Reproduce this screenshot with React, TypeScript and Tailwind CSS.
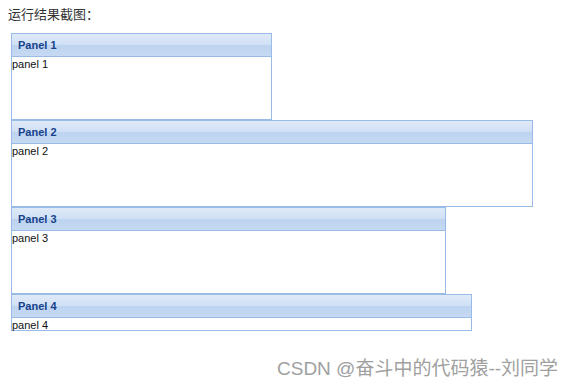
// Four stacked easyui-style panels, each with its own width.
const panels = [
  { title: "Panel 1", body: "panel 1", width: "w-[261px]", tall: true },
  { title: "Panel 2", body: "panel 2", width: "w-[522px]", tall: true },
  { title: "Panel 3", body: "panel 3", width: "w-[435px]", tall: true },
  { title: "Panel 4", body: "panel 4", width: "w-[461px]", tall: false },
];

function Panel({
  title,
  body,
  width,
  tall,
}: {
  title: string;
  body: string;
  width: string;
  tall: boolean;
}) {
  return (
    <div className={`${width} border border-[#99bbe8]`}>
      <div className="h-[23px] border-b border-[#99bbe8] bg-[linear-gradient(to_bottom,#dfeaf8_0%,#d0e0f5_48%,#bed3f0_52%,#c5d9f2_100%)] pl-[6px] flex items-center">
        <span className="text-[11px] font-bold text-[#15428b] font-['Liberation_Sans',Arial,sans-serif]">
          {title}
        </span>
      </div>
      <div
        className={`${tall ? "h-[62px]" : "h-[12px]"} bg-white text-[11px] leading-[11px] text-[#111] font-['Liberation_Sans',Arial,sans-serif] pt-[2px]`}
      >
        {body}
      </div>
    </div>
  );
}

export default function App() {
  return (
    <div className="w-[574px] h-[389px] bg-white relative overflow-hidden">
      <div className="pt-[6px] pl-[8px] text-[13px] leading-[16px] text-[#333] font-['Noto_Sans_CJK_SC',sans-serif]">
        运行结果截图：
      </div>
      <div className="mt-[11px] ml-[11px] flex flex-col items-start">
        {panels.map((p) => (
          <Panel key={p.title} {...p} />
        ))}
      </div>
      <div className="absolute left-[277px] top-[357px] text-[19px] leading-[24px] text-[#a0a0a0] font-['Liberation_Sans','Noto_Sans_CJK_SC',sans-serif]">
        CSDN @奋斗中的代码猿--刘同学
      </div>
    </div>
  );
}
